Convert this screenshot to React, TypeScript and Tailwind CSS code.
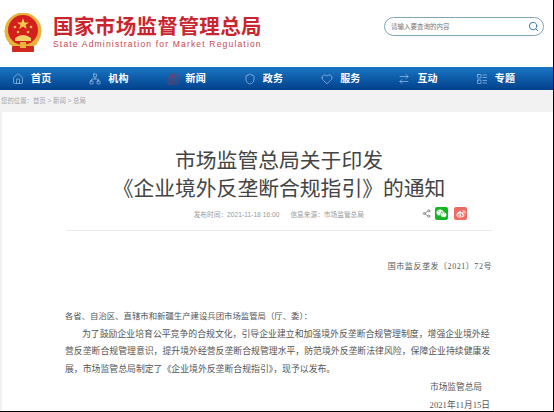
import { Home, Network, Newspaper, Shield, Heart, ArrowRightLeft, LayoutList, Search, Share2 } from "lucide-react";
import { RiWechatFill, RiWeiboFill } from "react-icons/ri";

const NAV = [
  { label: "首页", icon: Home, color: "text-blue-100" },
  { label: "机构", icon: Network, color: "text-blue-100" },
  { label: "新闻", icon: Newspaper, color: "text-[#c8283a]" },
  { label: "政务", icon: Shield, color: "text-blue-100" },
  { label: "服务", icon: Heart, color: "text-blue-100" },
  { label: "互动", icon: ArrowRightLeft, color: "text-blue-100" },
  { label: "专题", icon: LayoutList, color: "text-blue-100" },
];

const SONG = "font-['Liberation_Serif','Noto_Sans_CJK_SC',serif]";

function Emblem() {
  return (
    <svg width="38" height="40" viewBox="0 0 38 40" className="shrink-0">
      <circle cx="19" cy="18" r="18.5" fill="#e8b23c" />
      <circle cx="19" cy="17" r="15" fill="#d3201f" />
      <polygon points="19,5 20.5,9.5 25,9.5 21.5,12 22.8,16 19,13.6 15.2,16 16.5,12 13,9.5 17.5,9.5" fill="#f2c94c" />
      <circle cx="11" cy="14" r="1.3" fill="#f2c94c" />
      <circle cx="14" cy="19" r="1.3" fill="#f2c94c" />
      <circle cx="24" cy="19" r="1.3" fill="#f2c94c" />
      <circle cx="27" cy="14" r="1.3" fill="#f2c94c" />
      <path d="M11 28 L11 25 Q19 19 27 25 L27 28 Z" fill="#f2d06a" />
      <path d="M5 26 Q19 40 33 26 L33 31 Q19 42 5 31 Z" fill="#e8b23c" />
      <rect x="8" y="33" width="22" height="6" rx="1" fill="#cf2a22" />
      <rect x="16" y="29" width="6" height="6" fill="#e8b23c" />
    </svg>
  );
}

export default function App() {
  return (
    <div className="w-[554px] h-[412px] overflow-hidden bg-[#f2f2f2] border-r border-b border-black font-['Liberation_Sans','Noto_Sans_CJK_SC',sans-serif]">
      <header className="h-[67px] bg-white flex items-center justify-between pl-[4px] pr-[9px]">
        <div className="flex items-center gap-[11px] pb-[2px]">
          <Emblem />
          <div>
            <div className="text-[20.5px] leading-[24px] font-bold text-[#c9252f] tracking-[0.4px]">国家市场监督管理总局</div>
            <div className="text-[8.5px] leading-[11px] text-[#c9454d] tracking-[1.18px]">State Administration for Market Regulation</div>
          </div>
        </div>
        <div className="w-[160px] h-[19px] mb-[14px] rounded-full border border-[#7fa6b8] flex items-center justify-between pl-[6px] pr-[4px]">
          <span className="text-[6.5px] text-[#777]">请输入要查询的内容</span>
          <Search size={11} strokeWidth={2} className="text-[#2b6f9f]" />
        </div>
      </header>

      <nav className="h-[23px] bg-gradient-to-b from-[#1a76c4] to-[#04418c] flex items-center pl-[12px]">
        {NAV.map((item) => (
          <div key={item.label} className="w-[78.6px] flex items-center gap-[7px]">
            <item.icon size={12} strokeWidth={1} className={item.color} />
            <span className="text-[10px] font-bold text-white tracking-[0.2px]">{item.label}</span>
          </div>
        ))}
      </nav>

      <div className="h-[22px] flex items-center pl-[1px] text-[6.4px] text-[#a5a5a5]">
        您的位置&#xFF1A;首页 &gt; 新闻 &gt; 总局
      </div>

      <main className="ml-[2px] h-[300px] bg-white pl-[64px] pr-[61px] pt-[35px]">
        <h1 className="-mx-[10px] text-[20.8px] leading-[28px] text-[#444] text-center">
          市场监管总局关于印发
          <br />
          《企业境外反垄断合规指引》的通知
        </h1>

        <div className="mt-[4px] h-[24px] border-b border-[#e8e8e8] flex items-start justify-end pr-[25px]">
          <div className="flex items-center gap-[11px] mr-[58px] mt-[3px] text-[6.7px] text-[#999]">
            <span>发布时间&#xFF1A;2021-11-18 16:00</span>
            <span>信息来源&#xFF1A;市场监管总局</span>
          </div>
          <Share2 size={9} className="text-[#777] mt-[2px] mr-[4px]" />
          <div className="w-[13px] h-[13px] rounded-[2px] bg-[#12b71f] flex items-center justify-center">
            <RiWechatFill size={11} className="text-white" />
          </div>
          <div className="w-[13px] h-[13px] ml-[6px] rounded-[2px] bg-[#ee6a63] flex items-center justify-center">
            <RiWeiboFill size={10} className="text-white" />
          </div>
        </div>

        <p className={`mt-[30px] text-right text-[8px] leading-[12px] text-[#555] tracking-[0.55px] ${SONG}`}>国市监反垄发〔2021〕72号</p>

        <div className={`-ml-[1px] mt-[35px] text-[8.87px] leading-[17.5px] text-[#555] ${SONG}`}>
          <p className="text-[8.4px]">各省、自治区、直辖市和新疆生产建设兵团市场监管局&#xFF08;厅、委&#xFF09;&#xFF1A;</p>
          <p className="indent-[17px]">为了鼓励企业培育公平竞争的合规文化&#xFF0C;引导企业建立和加强境外反垄断合规管理制度&#xFF0C;增强企业境外经营反垄断合规管理意识&#xFF0C;提升境外经营反垄断合规管理水平&#xFF0C;防范境外反垄断法律风险&#xFF0C;保障企业持续健康发展&#xFF0C;市场监管总局制定了《企业境外反垄断合规指引》&#xFF0C;现予以发布。</p>
          <p className="mt-[1px] text-[8.68px] text-right pr-[10px]">市场监管总局</p>
          <p className="text-[8.68px] text-right pr-[2px]">2021年11月15日</p>
        </div>
      </main>
    </div>
  );
}
